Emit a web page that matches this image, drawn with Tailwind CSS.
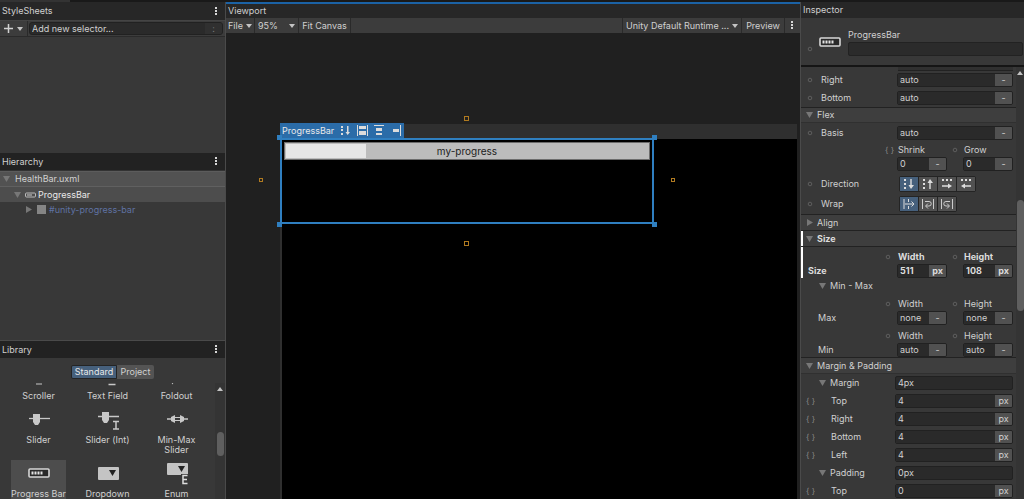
<!doctype html>
<html lang="en">
  <head>
    <meta charset="UTF-8" />
    <meta name="viewport" content="width=device-width, initial-scale=1.0" />
    <title>UI Builder</title>
    <script src="https://cdn.jsdelivr.net/npm/@tailwindcss/browser@4"></script>
  </head>
  <body class="flex h-screen flex-col overflow-hidden bg-[#191919] font-['Inter','Liberation_Sans',sans-serif] text-[9px] leading-[14px] text-[#d0d0d0]">
    <!-- shared icons -->
    <svg class="hidden">
      <symbol id="dots" viewBox="0 0 3 9"><path d="M0 0h2v2H0zM0 3h2v2H0zM0 6h2v2H0z" fill="#d8d8d8" /></symbol>
      <symbol id="caret" viewBox="0 0 6 4"><path d="M0 0h6L3 4z" fill="#c4c4c4" /></symbol>
      <symbol id="open" viewBox="0 0 7 6"><path d="M0 0h7L3.5 6z" fill="#777" /></symbol>
      <symbol id="closed" viewBox="0 0 6 7"><path d="M0 0l6 3.5L0 7z" fill="#777" /></symbol>
      <symbol id="ring" viewBox="0 0 6 6"><circle cx="3" cy="3" r="1.8" fill="none" stroke="#5e5e5e" /></symbol>
      <symbol id="bar" viewBox="0 0 22 10">
        <rect x="1" y="1" width="20" height="8" rx="1" fill="#2a2a2a" stroke="#d6d6d6" stroke-width="1.6" />
        <path d="M3.5 3.500h2v3h-2zM6.500 3.500h2v3h-2zM9.500 3.500h2v3h-2zM12.500 3.500h2v3h-2z" fill="#e2e2e2" />
      </symbol>
    </svg>

    <div class="h-[2px] shrink-0"><div class="h-[2px] w-[70px] bg-[#333]"></div></div>

    <main class="flex min-h-0 flex-1">
      <!-- left column -->
      <div class="flex w-[226px] shrink-0 flex-col border-r border-[#4a4a4a] bg-[#383838]">
        <section class="flex h-[151px] shrink-0 flex-col">
          <header class="flex h-[18px] items-center justify-between bg-[#272727] pr-[7px] pl-[2px]">
            <h2>StyleSheets</h2>
            <button aria-label="StyleSheets menu"><svg class="h-[9px] w-[3px]"><use href="#dots" /></svg></button>
          </header>
          <div class="flex h-[17px] items-center border-y border-t-[#444] border-b-[#2a2a2a] bg-[#3c3c3c]">
            <button class="flex h-full w-[28px] items-center justify-center gap-1 border-r border-[#2a2a2a]" aria-label="Add">
              <svg class="size-[9px]" viewBox="0 0 9 9"><path d="M4.500 0v9M0 4.500h9" stroke="#d0d0d0" stroke-width="1.500" /></svg>
              <svg class="h-[4px] w-[6px]"><use href="#caret" /></svg>
            </button>
            <div class="mr-[2px] ml-px flex h-[13px] flex-1 items-center overflow-hidden rounded-[3px] border border-[#212121] bg-[#2a2a2a]">
              <input class="min-w-0 flex-1 pl-[2px] outline-none" aria-label="New selector" value="Add new selector..." />
              <button class="flex h-full w-[17px] items-center justify-center bg-[#303030] text-[#777]" aria-label="Selector options">:</button>
            </div>
          </div>
        </section>

        <section class="flex h-[187px] shrink-0 flex-col">
          <header class="flex h-[18px] items-center justify-between border-b border-[#333] bg-[#222] pr-[7px] pl-[2px]">
            <h2>Hierarchy</h2>
            <button aria-label="Hierarchy menu"><svg class="h-[9px] w-[3px]"><use href="#dots" /></svg></button>
          </header>
          <ul>
            <li class="flex h-[16px] items-center gap-[5px] border-y border-t-[#5c5c5c] border-b-[#606060] bg-[#525252] pl-[3px]">
              <svg class="h-[6px] w-[7px]"><use href="#open" /></svg>HealthBar.uxml
            </li>
            <li class="flex h-[15px] items-center bg-[#4d4d4d] pl-[14px] text-[#e8e8e8]">
              <svg class="h-[6px] w-[7px]"><use href="#open" /></svg>
              <svg class="mr-[2px] ml-1 h-[6px] w-[11px]" viewBox="0 0 11 6"><rect x=".5" y="1" width="10" height="4" rx="1" fill="none" stroke="#bbb" /><path d="M2 3h5" stroke="#ccc" /></svg>
              ProgressBar
            </li>
            <li class="flex h-[15px] items-center pl-[26px] text-[#5f72a3]">
              <svg class="h-[7px] w-[6px]"><use href="#closed" /></svg>
              <span class="mr-[3px] ml-[5px] size-[9px] bg-[#858585]"></span>
              #unity-progress-bar
            </li>
          </ul>
        </section>

        <section class="flex min-h-0 flex-1 flex-col">
          <header class="flex h-[18px] shrink-0 items-center justify-between border-t border-[#4a4a4a] bg-[#222] pr-[7px] pl-[2px]">
            <h2>Library</h2>
            <button aria-label="Library menu"><svg class="h-[9px] w-[3px]"><use href="#dots" /></svg></button>
          </header>
          <div class="mt-[7px] flex h-[14px] shrink-0 justify-center">
            <button class="w-[46px] rounded-l-[2px] border border-[#242424] bg-[#46607c] leading-[12px] text-[#e8e8e8]">Standard</button>
            <button class="w-[37px] rounded-r-[2px] bg-[#545454] leading-[14px]">Project</button>
          </div>
          <div class="mt-1 flex min-h-0 flex-1">
            <div class="min-w-0 flex-1 overflow-hidden">
              <ul class="-mt-[21px] grid grid-cols-[repeat(3,55px)] grid-rows-[44px_54px_54px] gap-x-[14px] pl-[11px] text-center leading-[10px]">
                <li class="flex flex-col items-center">
                  <svg class="mb-px h-[28px] w-[24px] shrink-0" viewBox="0 0 24 28"><path d="M9 5h6M9 22h6" stroke="#c8c8c8" /></svg>Scroller
                </li>
                <li class="flex flex-col items-center">
                  <svg class="mb-px h-[28px] w-[24px] shrink-0" viewBox="0 0 24 28"><path d="M16 8v13M12.500 22.500h7" stroke="#c8c8c8" stroke-width="1.500" /></svg>Text Field
                </li>
                <li class="flex flex-col items-center">
                  <svg class="mb-px h-[28px] w-[24px] shrink-0" viewBox="0 0 24 28"><path d="M4 16h7L7.500 22.500z" fill="#c8c8c8" /></svg>Foldout
                </li>
                <li class="flex flex-col items-center">
                  <svg class="mb-px h-[28px] w-[24px] shrink-0" viewBox="0 0 24 28"><path d="M2 12.500h21" stroke="#c8c8c8" stroke-width="1.300" /><path d="M6 8h7v8l-2 3H8l-2-3z" fill="#c8c8c8" /></svg>Slider
                </li>
                <li class="flex flex-col items-center">
                  <svg class="mb-px h-[28px] w-[24px] shrink-0" viewBox="0 0 24 28"><path d="M2 10.500h21M17 15.500h6M20 15v8M17 23h6" stroke="#c8c8c8" stroke-width="1.500" /><path d="M6 6h7v8l-2 3H8l-2-3z" fill="#c8c8c8" /></svg>Slider (Int)
                </li>
                <li class="flex flex-col items-center">
                  <svg class="mb-px h-[28px] w-[24px] shrink-0" viewBox="0 0 24 28"><path d="M2 13h5M17 13h6" stroke="#c8c8c8" stroke-width="1.500" /><path d="M6 11l4-2v8l-4-2zM19 11l-4-2v8l4-2z" fill="#c8c8c8" /><path d="M9 11.500h7M9 14.500h7" stroke="#c8c8c8" /></svg>Min-Max Slider
                </li>
                <li class="flex flex-col items-center bg-[#4d4d4d]">
                  <svg class="mt-[8px] mb-[11px] h-[10px] w-[22px] shrink-0"><use href="#bar" /></svg><span class="whitespace-nowrap">Progress Bar</span>
                </li>
                <li class="flex flex-col items-center">
                  <svg class="mb-px h-[28px] w-[24px] shrink-0" viewBox="0 0 24 28"><rect x="2" y="7" width="21" height="13" rx="1" fill="#c4c4c4" /><path d="M13 10h7l-3.500 6z" fill="#222" /></svg>Dropdown
                </li>
                <li class="flex flex-col items-center">
                  <svg class="mb-px h-[28px] w-[24px] shrink-0" viewBox="0 0 24 28"><path d="M3 3h19a1 1 0 0 1 1 1v10h-7v1H3a1 1 0 0 1-1-1V4a1 1 0 0 1 1-1z" fill="#c4c4c4" /><path d="M13 6h7l-3.500 6z" fill="#222" /><path d="M22.500 15.500H18v8h4.500M18 19.500h4" fill="none" stroke="#ddd" stroke-width="1.500" /></svg>Enum
                </li>
              </ul>
            </div>
            <div class="flex w-[10px] shrink-0 flex-col items-center bg-[#343434]">
              <svg class="mt-1 h-[4px] w-[6px] rotate-180"><use href="#caret" /></svg>
              <div class="mt-[41px] h-[24px] w-[7px] rounded-full bg-[#5f5f5f]"></div>
            </div>
          </div>
        </section>
      </div>

      <!-- viewport -->
      <section class="flex min-w-0 flex-1 flex-col">
        <header class="h-[16px] shrink-0 border-t-2 border-[#1b62a5] bg-[#272727] pl-[2px]"><h2>Viewport</h2></header>
        <div class="flex h-[15px] shrink-0 items-center bg-[#3c3c3c]">
          <button class="flex h-full w-[29px] items-center gap-[3px] border-r border-[#2a2a2a] pl-[2px]">File<svg class="h-[4px] w-[6px]"><use href="#caret" /></svg></button>
          <div class="flex h-full w-[44px] items-center border-r border-[#2a2a2a] pr-[3px] pl-[3px]">
            <select class="min-w-0 flex-1 appearance-none" aria-label="Zoom"><option>95%</option></select>
            <svg class="h-[4px] w-[6px]"><use href="#caret" /></svg>
          </div>
          <button class="h-full w-[52px] border-r border-[#2a2a2a]">Fit Canvas</button>
          <div class="ml-auto flex h-full w-[120px] items-center border-x border-[#2a2a2a] pr-[3px] pl-[3px]">
            <select class="min-w-0 flex-1 appearance-none" aria-label="Theme"><option>Unity Default Runtime ...</option></select>
            <svg class="h-[4px] w-[6px]"><use href="#caret" /></svg>
          </div>
          <button class="h-full w-[43px] border-r border-[#2a2a2a]">Preview</button>
          <button class="flex h-full w-[15px] items-center justify-center" aria-label="Viewport menu"><svg class="h-[9px] w-[3px]"><use href="#dots" /></svg></button>
        </div>

        <!-- canvas -->
        <div class="relative min-h-0 flex-1 overflow-hidden bg-[#202020]">
          <div class="absolute top-[91px] right-[3px] bottom-0 left-[54px] border-t-[15px] border-l-2 border-[#2f2f2f] bg-black"></div>
          <div class="absolute top-[105px] left-[54px] h-[86px] w-[374px] border-2 border-[#2f7fc0] p-[2px]">
            <div class="relative h-[18px] w-full border border-[#6c6c6c] bg-[#bcbcbc] p-px" role="progressbar" aria-valuenow="22" aria-label="my-progress">
              <div class="h-full bg-[#e6e6e6]" style="width: 22%"></div>
              <span class="absolute inset-0 text-center text-[10px] leading-[16px] text-[#222]">my-progress</span>
            </div>
          </div>
          <div class="absolute top-[90px] left-[54px] flex h-[15px] w-[124px] items-center bg-[#2b6ca8] pr-[3px] pl-[2px] text-[#e8e8e8]">
            ProgressBar
            <svg class="ml-auto h-[11px] w-[61px]" viewBox="0 0 61 11" fill="#dcdcdc">
              <path d="M1 1h2v2H1zM1 4h2v2H1zM1 8h2v2H1zM7 1h1.500v6H10L7.700 10 5.500 7H7z" />
              <path d="M17 0h1v11h-1zM27 0h1v11h-1zM19 1h7v3h-7zM19 6h7v4h-7zM34 0h10v1H34zM36 3h6v3h-6zM36 8h6v2h-6zM53 4h6v3h-6zM60 0h1v11h-1z" />
            </svg>
          </div>
          <div class="absolute top-[102px] left-[51px] size-[5px] bg-[#2f7fc0]"></div>
          <div class="absolute top-[102px] left-[426px] size-[5px] bg-[#2f7fc0]"></div>
          <div class="absolute top-[189px] left-[51px] size-[5px] bg-[#2f7fc0]"></div>
          <div class="absolute top-[189px] left-[426px] size-[5px] bg-[#2f7fc0]"></div>
          <div class="absolute top-[83px] left-[238px] size-[5px] border border-[#b07a20]"></div>
          <div class="absolute top-[145px] left-[33px] size-[4px] border border-[#b07a20]"></div>
          <div class="absolute top-[145px] left-[445px] size-[4px] border border-[#b07a20]"></div>
          <div class="absolute top-[208px] left-[238px] size-[5px] border border-[#b07a20]"></div>
        </div>
      </section>

      <!-- inspector -->
      <section class="flex w-[224px] shrink-0 flex-col border-l border-[#4a4a4a] bg-[#383838]">
        <header class="h-[16px] shrink-0 bg-[#272727] pl-[2px] leading-[16px]"><h2>Inspector</h2></header>
        <div class="flex h-[49px] shrink-0 items-center border-b-2 border-[#151515] pl-[6px]">
          <svg class="mt-[14px] size-[6px]"><use href="#ring" /></svg>
          <svg class="mr-[7px] ml-[6px] h-[10px] w-[22px]"><use href="#bar" /></svg>
          <div class="flex-1 pr-px">
            <label for="elementName">ProgressBar</label>
            <input id="elementName" class="block h-[14px] w-full rounded-[2px] border border-[#222] bg-[#2b2b2b] px-[2px] outline-none" />
          </div>
        </div>

        <div class="flex min-h-0 flex-1">
          <div class="min-w-0 flex-1 overflow-hidden">
            <div class="ml-[97px] h-[4px] w-[115px] border-b border-[#222] bg-[#303030]"></div>
            <div class="flex h-[18px] items-center pr-[3px] pl-[6px]">
              <svg class="size-[6px]"><use href="#ring" /></svg>
              <label for="posRight" class="flex-1 pl-[8px]">Right</label>
              <div class="flex h-[14px] w-[116px] overflow-hidden rounded-[2px] border border-[#212121]"><input id="posRight" value="auto" class="min-w-0 flex-1 bg-[#2a2a2a] pl-[2px] outline-none" /><button class="w-[17px] bg-[#515151] leading-[12px]">-</button></div>
            </div>
            <div class="flex h-[18px] items-center pr-[3px] pl-[6px]">
              <svg class="size-[6px]"><use href="#ring" /></svg>
              <label for="posBottom" class="flex-1 pl-[8px]">Bottom</label>
              <div class="flex h-[14px] w-[116px] overflow-hidden rounded-[2px] border border-[#212121]"><input id="posBottom" value="auto" class="min-w-0 flex-1 bg-[#2a2a2a] pl-[2px] outline-none" /><button class="w-[17px] bg-[#515151] leading-[12px]">-</button></div>
            </div>

            <h3 class="flex h-[16px] items-center gap-[4px] border-y border-t-[#222] border-b-[#303030] bg-[#3e3e3e] pl-[5px]"><svg class="h-[6px] w-[7px]"><use href="#open" /></svg>Flex</h3>
            <div class="flex h-[20px] items-center pr-[3px] pl-[6px]">
              <svg class="size-[6px]"><use href="#ring" /></svg>
              <label for="basis" class="flex-1 pl-[8px]">Basis</label>
              <div class="flex h-[14px] w-[116px] overflow-hidden rounded-[2px] border border-[#212121]"><input id="basis" value="auto" class="min-w-0 flex-1 bg-[#2a2a2a] pl-[2px] outline-none" /><button class="w-[17px] bg-[#515151] leading-[12px]">-</button></div>
            </div>
            <div class="flex h-[14px] items-center justify-end pr-[3px]">
              <span class="w-[13px] text-[8px] text-[#8a8a8a]">{ }</span><label for="shrink" class="w-[54px]">Shrink</label>
              <svg class="mr-[6px] size-[6px]"><use href="#ring" /></svg><label for="grow" class="w-[49px]">Grow</label>
            </div>
            <div class="flex h-[14px] justify-end gap-[16px] pr-[3px]">
              <div class="flex w-[50px] overflow-hidden rounded-[2px] border border-[#212121]"><input id="shrink" value="0" class="min-w-0 flex-1 bg-[#2a2a2a] pl-[2px] outline-none" /><button class="w-[17px] bg-[#515151] leading-[12px]">-</button></div>
              <div class="flex w-[50px] overflow-hidden rounded-[2px] border border-[#212121]"><input id="grow" value="0" class="min-w-0 flex-1 bg-[#2a2a2a] pl-[2px] outline-none" /><button class="w-[17px] bg-[#515151] leading-[12px]">-</button></div>
            </div>
            <div class="mt-[2px] flex h-[21px] items-center pl-[6px]">
              <svg class="size-[6px]"><use href="#ring" /></svg>
              <span class="w-[86px] pl-[8px]">Direction</span>
              <div class="flex gap-px rounded-[2px] border border-[#242424] bg-[#242424]" role="group" aria-label="Direction">
                <button class="flex h-[14px] w-[18px] items-center justify-center bg-[#46607c]" aria-label="Column"><svg class="size-[10px]" viewBox="0 0 10 10" fill="#ddd"><path d="M0 0h2v2H0zM0 4h2v2H0zM0 8h2v2H0zM6.300 0h1.400v6H10L7 10 4.500 6h1.800z" /></svg></button>
                <button class="flex h-[14px] w-[18px] items-center justify-center bg-[#515151]" aria-label="Column reverse"><svg class="size-[10px]" viewBox="0 0 10 10" fill="#ddd"><path d="M0 0h2v2H0zM0 4h2v2H0zM0 8h2v2H0zM6.300 10h1.400V4H10L7 0 4.500 4h1.800z" /></svg></button>
                <button class="flex h-[14px] w-[18px] items-center justify-center bg-[#515151]" aria-label="Row"><svg class="size-[10px]" viewBox="0 0 10 10" fill="#ddd"><path d="M0 0h2v2H0zM4 0h2v2H4zM8 0h2v2H8zM0 6.300h6V4.500L10 7 6 9.500V7.700H0z" /></svg></button>
                <button class="flex h-[14px] w-[18px] items-center justify-center bg-[#515151]" aria-label="Row reverse"><svg class="size-[10px]" viewBox="0 0 10 10" fill="#ddd"><path d="M0 0h2v2H0zM4 0h2v2H4zM8 0h2v2H8zM10 6.300H4V4.500L0 7l4 2.500V7.700h6z" /></svg></button>
              </div>
            </div>
            <div class="flex h-[20px] items-center pl-[6px]">
              <svg class="size-[6px]"><use href="#ring" /></svg>
              <span class="w-[86px] pl-[8px]">Wrap</span>
              <div class="flex gap-px rounded-[2px] border border-[#242424] bg-[#242424]" role="group" aria-label="Wrap">
                <button class="flex h-[14px] w-[18px] items-center justify-center bg-[#46607c]" aria-label="No wrap"><svg class="h-[10px] w-[12px]" viewBox="0 0 12 10"><path d="M1 0v10M2 5h9M8.500 2.500L11 5 8.500 7.500M5.500 0v3M5.500 7v3" fill="none" stroke="#ddd" /></svg></button>
                <button class="flex h-[14px] w-[18px] items-center justify-center bg-[#515151]" aria-label="Wrap"><svg class="h-[10px] w-[12px]" viewBox="0 0 12 10"><path d="M.5 0v10M11.500 0v10M3 2.500h4a2 2 0 0 1 0 4.500H4M6 4.500L3.500 7 6 9.500" fill="none" stroke="#ccc" /></svg></button>
                <button class="flex h-[14px] w-[18px] items-center justify-center bg-[#515151]" aria-label="Wrap reverse"><svg class="h-[10px] w-[12px]" viewBox="0 0 12 10"><path d="M.5 0v10M11.500 0v10M9 2.500H5a2 2 0 0 0 0 4.500h3M6 4.500L8.500 7 6 9.500" fill="none" stroke="#ccc" /></svg></button>
              </div>
            </div>

            <h3 class="flex h-[16px] items-center gap-[4px] border-t border-[#222] bg-[#3e3e3e] pl-[6px]"><svg class="h-[7px] w-[6px]"><use href="#closed" /></svg>Align</h3>
            <h3 class="flex h-[17px] items-center gap-[4px] border-y border-[#222] bg-[#3e3e3e] font-bold text-[#dcdcdc]"><span class="h-full w-[2px] bg-white"></span><svg class="-ml-px h-[6px] w-[7px]"><use href="#open" /></svg>Size</h3>
            <div class="h-[31px] border-l-2 border-white font-bold text-[#dcdcdc]">
              <div class="flex h-[17px] items-end justify-end pr-[3px]">
                <svg class="mr-[7px] mb-[4px] size-[6px]"><use href="#ring" /></svg><label for="width" class="w-[54px]">Width</label>
                <svg class="mr-[6px] mb-[4px] size-[6px]"><use href="#ring" /></svg><label for="height" class="w-[49px]">Height</label>
              </div>
              <div class="flex h-[14px] pr-[3px] pl-[5px]">
                <span class="flex-1">Size</span>
                <div class="mr-[16px] flex w-[50px] overflow-hidden rounded-[2px] border border-[#212121]"><input id="width" value="511" class="min-w-0 flex-1 bg-[#2a2a2a] pl-[2px] outline-none" /><button class="w-[17px] bg-[#515151] leading-[12px]">px</button></div>
                <div class="flex w-[50px] overflow-hidden rounded-[2px] border border-[#212121]"><input id="height" value="108" class="min-w-0 flex-1 bg-[#2a2a2a] pl-[2px] outline-none" /><button class="w-[17px] bg-[#515151] leading-[12px]">px</button></div>
              </div>
            </div>
            <h4 class="flex h-[15px] items-center gap-[4px] pl-[18px]"><svg class="h-[6px] w-[7px]"><use href="#open" /></svg>Min - Max</h4>
            <div class="flex h-[18px] items-end justify-end pr-[3px]">
              <svg class="mr-[7px] mb-[4px] size-[6px]"><use href="#ring" /></svg><label for="maxWidth" class="w-[54px]">Width</label>
              <svg class="mr-[6px] mb-[4px] size-[6px]"><use href="#ring" /></svg><label for="maxHeight" class="w-[49px]">Height</label>
            </div>
            <div class="flex h-[14px] pr-[3px] pl-[17px]">
              <span class="flex-1">Max</span>
              <div class="mr-[16px] flex w-[50px] overflow-hidden rounded-[2px] border border-[#212121]"><input id="maxWidth" value="none" class="min-w-0 flex-1 bg-[#2a2a2a] pl-[2px] outline-none" /><button class="w-[17px] bg-[#515151] leading-[12px]">-</button></div>
              <div class="flex w-[50px] overflow-hidden rounded-[2px] border border-[#212121]"><input id="maxHeight" value="none" class="min-w-0 flex-1 bg-[#2a2a2a] pl-[2px] outline-none" /><button class="w-[17px] bg-[#515151] leading-[12px]">-</button></div>
            </div>
            <div class="flex h-[18px] items-end justify-end pr-[3px]">
              <svg class="mr-[7px] mb-[4px] size-[6px]"><use href="#ring" /></svg><label for="minWidth" class="w-[54px]">Width</label>
              <svg class="mr-[6px] mb-[4px] size-[6px]"><use href="#ring" /></svg><label for="minHeight" class="w-[49px]">Height</label>
            </div>
            <div class="flex h-[14px] pr-[3px] pl-[17px]">
              <span class="flex-1">Min</span>
              <div class="mr-[16px] flex w-[50px] overflow-hidden rounded-[2px] border border-[#212121]"><input id="minWidth" value="auto" class="min-w-0 flex-1 bg-[#2a2a2a] pl-[2px] outline-none" /><button class="w-[17px] bg-[#515151] leading-[12px]">-</button></div>
              <div class="flex w-[50px] overflow-hidden rounded-[2px] border border-[#212121]"><input id="minHeight" value="auto" class="min-w-0 flex-1 bg-[#2a2a2a] pl-[2px] outline-none" /><button class="w-[17px] bg-[#515151] leading-[12px]">-</button></div>
            </div>

            <h3 class="flex h-[17px] items-center gap-[4px] border-y border-t-[#222] border-b-[#303030] bg-[#3e3e3e] pl-[5px]"><svg class="h-[6px] w-[7px]"><use href="#open" /></svg>Margin &amp; Padding</h3>
            <div class="flex h-[18px] items-center gap-[4px] pr-[3px] pl-[18px]">
              <svg class="h-[6px] w-[7px]"><use href="#open" /></svg>
              <label for="margin" class="flex-1">Margin</label>
              <input id="margin" value="4px" class="h-[14px] w-[118px] rounded-[2px] border border-[#212121] bg-[#2a2a2a] pl-[2px] outline-none" />
            </div>
            <div class="flex h-[18px] items-center pr-[3px] pl-[5px]">
              <span class="w-[25px] text-[8px] text-[#8a8a8a]">{ }</span>
              <label for="marginTop" class="flex-1">Top</label>
              <div class="flex h-[14px] w-[118px] overflow-hidden rounded-[2px] border border-[#212121]"><input id="marginTop" value="4" class="min-w-0 flex-1 bg-[#2a2a2a] pl-[2px] outline-none" /><button class="w-[17px] bg-[#515151] leading-[12px]">px</button></div>
            </div>
            <div class="flex h-[18px] items-center pr-[3px] pl-[5px]">
              <span class="w-[25px] text-[8px] text-[#8a8a8a]">{ }</span>
              <label for="marginRight" class="flex-1">Right</label>
              <div class="flex h-[14px] w-[118px] overflow-hidden rounded-[2px] border border-[#212121]"><input id="marginRight" value="4" class="min-w-0 flex-1 bg-[#2a2a2a] pl-[2px] outline-none" /><button class="w-[17px] bg-[#515151] leading-[12px]">px</button></div>
            </div>
            <div class="flex h-[18px] items-center pr-[3px] pl-[5px]">
              <span class="w-[25px] text-[8px] text-[#8a8a8a]">{ }</span>
              <label for="marginBottom" class="flex-1">Bottom</label>
              <div class="flex h-[14px] w-[118px] overflow-hidden rounded-[2px] border border-[#212121]"><input id="marginBottom" value="4" class="min-w-0 flex-1 bg-[#2a2a2a] pl-[2px] outline-none" /><button class="w-[17px] bg-[#515151] leading-[12px]">px</button></div>
            </div>
            <div class="flex h-[18px] items-center pr-[3px] pl-[5px]">
              <span class="w-[25px] text-[8px] text-[#8a8a8a]">{ }</span>
              <label for="marginLeft" class="flex-1">Left</label>
              <div class="flex h-[14px] w-[118px] overflow-hidden rounded-[2px] border border-[#212121]"><input id="marginLeft" value="4" class="min-w-0 flex-1 bg-[#2a2a2a] pl-[2px] outline-none" /><button class="w-[17px] bg-[#515151] leading-[12px]">px</button></div>
            </div>
            <div class="flex h-[18px] items-center gap-[4px] pr-[3px] pl-[18px]">
              <svg class="h-[6px] w-[7px]"><use href="#open" /></svg>
              <label for="padding" class="flex-1">Padding</label>
              <input id="padding" value="0px" class="h-[14px] w-[118px] rounded-[2px] border border-[#212121] bg-[#2a2a2a] pl-[2px] outline-none" />
            </div>
            <div class="flex h-[18px] items-center pr-[3px] pl-[5px]">
              <span class="w-[25px] text-[8px] text-[#8a8a8a]">{ }</span>
              <label for="paddingTop" class="flex-1">Top</label>
              <div class="flex h-[14px] w-[118px] overflow-hidden rounded-[2px] border border-[#212121]"><input id="paddingTop" value="0" class="min-w-0 flex-1 bg-[#2a2a2a] pl-[2px] outline-none" /><button class="w-[17px] bg-[#515151] leading-[12px]">px</button></div>
            </div>
          </div>
          <div class="flex w-[8px] shrink-0 flex-col items-center bg-[#343434]">
            <svg class="mt-1 h-[4px] w-[6px] rotate-180"><use href="#caret" /></svg>
            <div class="mt-[125px] h-[111px] w-[7px] rounded-full bg-[#5f5f5f]"></div>
          </div>
        </div>
      </section>
    </main>
  </body>
</html>
